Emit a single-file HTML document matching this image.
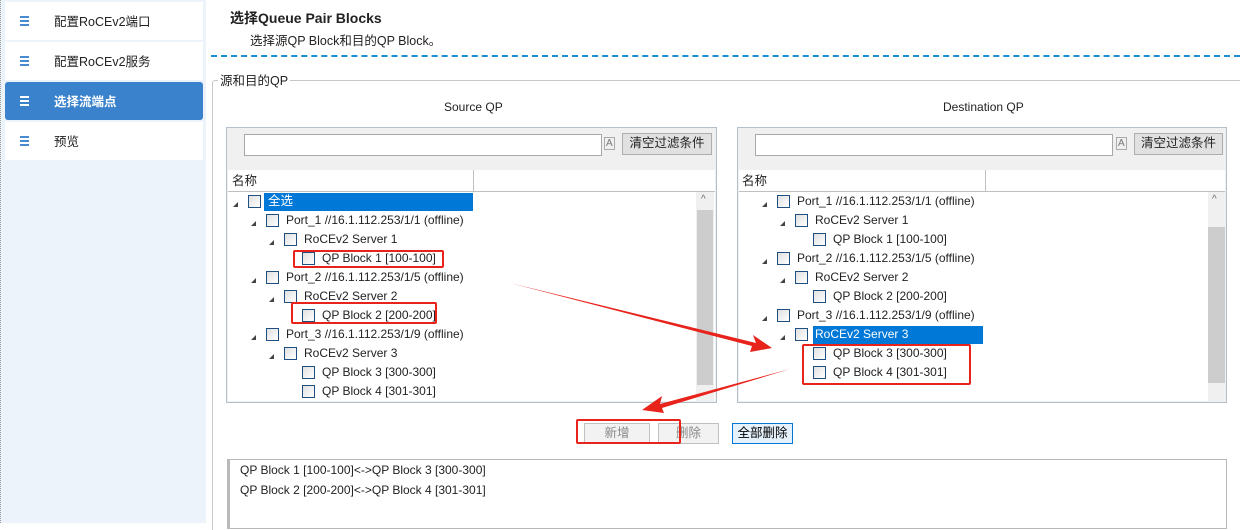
<!DOCTYPE html>
<html><head><meta charset="utf-8"><style>
*{margin:0;padding:0;box-sizing:border-box}
body{width:1240px;height:523px;overflow:hidden;background:#fff;font-family:"Liberation Sans","Noto Sans CJK SC",sans-serif;font-size:12px;color:#222;position:relative}
.a{position:absolute;white-space:nowrap}
.side{left:0;top:0;width:206px;height:523px;background:#ecf3fa;border-left:1px dotted #999}
.item{position:absolute;left:4px;width:198px;height:38px;background:#fff}
.item .ic{position:absolute;left:15px;top:14px;width:9px;height:10px;background:repeating-linear-gradient(to bottom,#4a8ad0 0,#4a8ad0 2px,transparent 2px,transparent 4px)}
.item span{position:absolute;left:49px;top:9px;font-size:12.5px}
.sel{background:#3a82cc;border-radius:3px}
.sel span{color:#fff;font-weight:bold}
.sel .ic{background:repeating-linear-gradient(to bottom,#fff 0,#fff 2px,transparent 2px,transparent 4px)}
.panel{background:#f0f0f0;border:1px solid #b4bfc9}
.inp{background:#fff;border:1px solid #a8a8a8}
.btn{background:#e1e1e1;border:1px solid #adadad;text-align:center;line-height:19px;font-size:12.5px}
.tree{background:#fff}
.cb{position:absolute;width:13px;height:13px;border:1px solid #1f4f80;background:linear-gradient(135deg,#e0e0e0,#fff)}
.tri{position:absolute;width:0;height:0;border-left:5px solid transparent;border-bottom:5px solid #444}
.t{position:absolute;font-size:12px;line-height:15px}
.rb{position:absolute;border:2px solid #e8231c;border-radius:2px}
</style></head><body>
<div class="a side">
 <div class="item" style="top:2px"><div class="ic"></div><span>配置RoCEv2端口</span></div>
 <div class="item" style="top:42px"><div class="ic"></div><span>配置RoCEv2服务</span></div>
 <div class="item sel" style="top:82px"><div class="ic"></div><span>选择流端点</span></div>
 <div class="item" style="top:122px"><div class="ic"></div><span>预览</span></div>
</div>
<div class="a" style="left:230px;top:8px;font-size:14px;font-weight:bold">选择Queue Pair Blocks</div>
<div class="a" style="left:250px;top:30px;font-size:12.5px">选择源QP Block和目的QP Block。</div>
<div class="a" style="left:211px;top:55px;width:1029px;border-top:2px dashed #1a8fd6"></div>
<div class="a" style="left:212px;top:80px;width:1028px;height:450px;border-left:1px solid #c8c8c8;border-top:1px solid #c8c8c8;border-radius:3px 0 0 0"></div>
<div class="a" style="left:218px;top:70px;background:#fff;padding:0 2px;font-size:12.5px">源和目的QP</div>
<div class="a" style="left:444px;top:100px;font-size:12px">Source QP</div>
<div class="a" style="left:943px;top:100px;font-size:12px">Destination QP</div>

<!-- left panel -->
<div class="a panel" style="left:226px;top:127px;width:491px;height:276px"></div>
<div class="a inp" style="left:244px;top:134px;width:358px;height:22px"></div>
<div class="a" style="left:604px;top:137px;font-size:10px;color:#777;border:1px solid #aaa;padding:0 1px">A</div>
<div class="a btn" style="left:622px;top:133px;width:90px;height:22px">清空过滤条件</div>
<div class="a tree" style="left:228px;top:170px;width:487px;height:231px"></div>
<div class="a" style="left:228px;top:170px;width:487px;height:22px;border-bottom:1px solid #c0c0c0;background:#fff"></div>
<div class="a" style="left:473px;top:170px;height:22px;border-left:1px solid #c0c0c0"></div>
<div class="t" style="left:232px;top:174px;font-size:12.5px">名称</div>
<div class="a" style="left:696px;top:192px;width:18px;height:209px;background:#f0f0f0"></div>
<div class="a" style="left:697px;top:210px;width:16px;height:175px;background:#cdcdcd"></div>
<div class="a" style="left:701px;top:194px;font-size:10px;color:#666">^</div>
<div class="a" style="left:264px;top:193px;width:209px;height:18px;background:#0078d7"></div>

<div class="tri" style="left:233px;top:202px"></div><div class="cb" style="left:248px;top:195px"></div><div class="t" style="left:268px;top:194px;color:#fff;font-size:12.5px">全选</div>
<div class="tri" style="left:251px;top:221px"></div><div class="cb" style="left:266px;top:214px"></div><div class="t" style="left:286px;top:213px">Port_1 //16.1.112.253/1/1 (offline)</div>
<div class="tri" style="left:269px;top:240px"></div><div class="cb" style="left:284px;top:233px"></div><div class="t" style="left:304px;top:232px">RoCEv2 Server 1</div>
<div class="cb" style="left:302px;top:252px"></div><div class="t" style="left:322px;top:251px">QP Block 1 [100-100]</div>
<div class="tri" style="left:251px;top:278px"></div><div class="cb" style="left:266px;top:271px"></div><div class="t" style="left:286px;top:270px">Port_2 //16.1.112.253/1/5 (offline)</div>
<div class="tri" style="left:269px;top:297px"></div><div class="cb" style="left:284px;top:290px"></div><div class="t" style="left:304px;top:289px">RoCEv2 Server 2</div>
<div class="cb" style="left:302px;top:309px"></div><div class="t" style="left:322px;top:308px">QP Block 2 [200-200]</div>
<div class="tri" style="left:251px;top:335px"></div><div class="cb" style="left:266px;top:328px"></div><div class="t" style="left:286px;top:327px">Port_3 //16.1.112.253/1/9 (offline)</div>
<div class="tri" style="left:269px;top:354px"></div><div class="cb" style="left:284px;top:347px"></div><div class="t" style="left:304px;top:346px">RoCEv2 Server 3</div>
<div class="cb" style="left:302px;top:366px"></div><div class="t" style="left:322px;top:365px">QP Block 3 [300-300]</div>
<div class="cb" style="left:302px;top:385px"></div><div class="t" style="left:322px;top:384px">QP Block 4 [301-301]</div>

<!-- right panel -->
<div class="a panel" style="left:737px;top:127px;width:490px;height:276px"></div>
<div class="a inp" style="left:755px;top:134px;width:358px;height:22px"></div>
<div class="a" style="left:1116px;top:137px;font-size:10px;color:#777;border:1px solid #aaa;padding:0 1px">A</div>
<div class="a btn" style="left:1134px;top:133px;width:89px;height:22px">清空过滤条件</div>
<div class="a tree" style="left:739px;top:170px;width:486px;height:231px"></div>
<div class="a" style="left:739px;top:170px;width:486px;height:22px;border-bottom:1px solid #c0c0c0;background:#fff"></div>
<div class="a" style="left:985px;top:170px;height:22px;border-left:1px solid #c0c0c0"></div>
<div class="t" style="left:742px;top:174px;font-size:12.5px">名称</div>
<div class="a" style="left:1208px;top:192px;width:17px;height:209px;background:#f0f0f0"></div>
<div class="a" style="left:1208px;top:227px;width:17px;height:156px;background:#cdcdcd"></div>
<div class="a" style="left:1212px;top:194px;font-size:10px;color:#666">^</div>
<div class="a" style="left:813px;top:326px;width:170px;height:18px;background:#0078d7"></div>

<div class="tri" style="left:762px;top:202px"></div><div class="cb" style="left:777px;top:195px"></div><div class="t" style="left:797px;top:194px">Port_1 //16.1.112.253/1/1 (offline)</div>
<div class="tri" style="left:780px;top:221px"></div><div class="cb" style="left:795px;top:214px"></div><div class="t" style="left:815px;top:213px">RoCEv2 Server 1</div>
<div class="cb" style="left:813px;top:233px"></div><div class="t" style="left:833px;top:232px">QP Block 1 [100-100]</div>
<div class="tri" style="left:762px;top:259px"></div><div class="cb" style="left:777px;top:252px"></div><div class="t" style="left:797px;top:251px">Port_2 //16.1.112.253/1/5 (offline)</div>
<div class="tri" style="left:780px;top:278px"></div><div class="cb" style="left:795px;top:271px"></div><div class="t" style="left:815px;top:270px">RoCEv2 Server 2</div>
<div class="cb" style="left:813px;top:290px"></div><div class="t" style="left:833px;top:289px">QP Block 2 [200-200]</div>
<div class="tri" style="left:762px;top:316px"></div><div class="cb" style="left:777px;top:309px"></div><div class="t" style="left:797px;top:308px">Port_3 //16.1.112.253/1/9 (offline)</div>
<div class="tri" style="left:780px;top:335px"></div><div class="cb" style="left:795px;top:328px"></div><div class="t" style="left:815px;top:327px;color:#fff">RoCEv2 Server 3</div>
<div class="cb" style="left:813px;top:347px"></div><div class="t" style="left:833px;top:346px">QP Block 3 [300-300]</div>
<div class="cb" style="left:813px;top:366px"></div><div class="t" style="left:833px;top:365px">QP Block 4 [301-301]</div>

<!-- buttons -->
<div class="a btn" style="left:584px;top:423px;width:66px;height:21px;background:#f2f2f2;color:#888;border-color:#c0c0c0">新增</div>
<div class="a btn" style="left:658px;top:423px;width:61px;height:21px;background:#f2f2f2;color:#888;border-color:#c0c0c0">删除</div>
<div class="a btn" style="left:732px;top:423px;width:61px;height:21px;background:#e5f1fb;border-color:#0078d7;color:#000">全部删除</div>

<!-- bottom list -->
<div class="a" style="left:227px;top:459px;width:1000px;height:70px;border:1px solid #b9b9b9;border-left:3px solid #b9b9b9"></div>
<div class="t" style="left:240px;top:463px">QP Block 1 [100-100]&lt;-&gt;QP Block 3 [300-300]</div>
<div class="t" style="left:240px;top:483px">QP Block 2 [200-200]&lt;-&gt;QP Block 4 [301-301]</div>

<!-- annotations -->
<div class="rb" style="left:293px;top:250px;width:151px;height:18px"></div>
<div class="rb" style="left:291px;top:302px;width:146px;height:22px"></div>
<div class="rb" style="left:802px;top:344px;width:169px;height:41px"></div>
<div class="rb" style="left:576px;top:419px;width:105px;height:25px"></div>
<svg class="a" style="left:0;top:0" width="1240" height="523">
 <polygon points="510,283 756,343 753,335 772,348 750,352 752,346" fill="#e8231c"/>
 <polygon points="790,369 660,404 662,396 642,410 664,413 662,408" fill="#e8231c"/>
</svg>
</body></html>
